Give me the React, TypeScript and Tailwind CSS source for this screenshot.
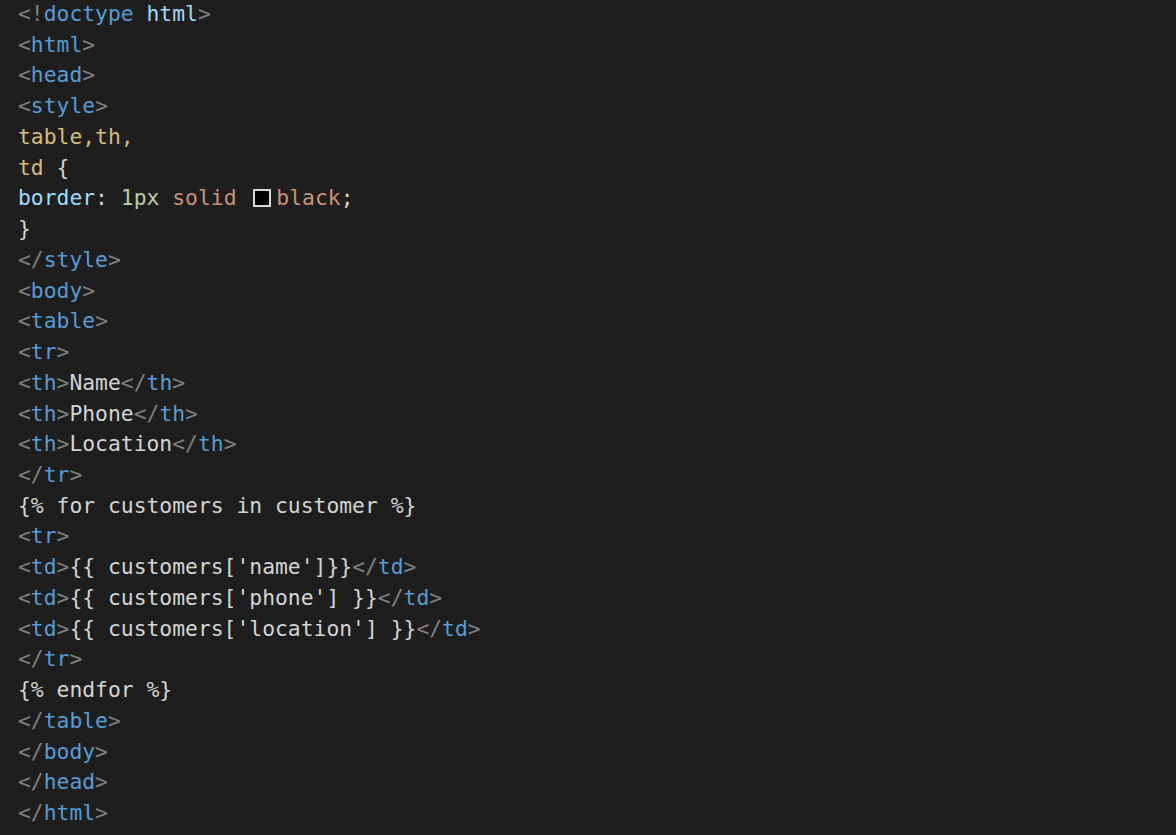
const P = "text-[#808080]"; // punctuation / brackets
const T = "text-[#569cd6]"; // tag names
const A = "text-[#9cdcfe]"; // attributes / properties
const S = "text-[#d7ba7d]"; // css selectors
const N = "text-[#b5cea8]"; // numbers
const V = "text-[#ce9178]"; // values
const X = "text-[#d4d4d4]"; // plain text

type Tok = [string, string];

function open(tag: string): Tok[] {
  return [["<", P], [tag, T], [">", P]];
}

function close(tag: string): Tok[] {
  return [["</", P], [tag, T], [">", P]];
}

const lines: (Tok[] | "swatch")[] = [
  [["<!", P], ["doctype", T], [" ", X], ["html", A], [">", P]],
  open("html"),
  open("head"),
  open("style"),
  [["table,th,", S]],
  [["td", S], [" {", X]],
  "swatch",
  [["}", X]],
  close("style"),
  open("body"),
  open("table"),
  open("tr"),
  [...open("th"), ["Name", X], ...close("th")],
  [...open("th"), ["Phone", X], ...close("th")],
  [...open("th"), ["Location", X], ...close("th")],
  close("tr"),
  [["{% for customers in customer %}", X]],
  open("tr"),
  [...open("td"), ["{{ customers['name']}}", X], ...close("td")],
  [...open("td"), ["{{ customers['phone'] }}", X], ...close("td")],
  [...open("td"), ["{{ customers['location'] }}", X], ...close("td")],
  close("tr"),
  [["{% endfor %}", X]],
  close("table"),
  close("body"),
  close("head"),
  close("html"),
];

export default function App() {
  return (
    <div className="h-[835px] w-[1176px] overflow-hidden bg-[#1e1e1e]">
      <div className="-mt-px pl-[18px] font-['DejaVu_Sans_Mono','Liberation_Mono',monospace] text-[21.35px] leading-[30.73px] whitespace-pre">
        {lines.map((line, i) =>
          line === "swatch" ? (
            <div key={i}>
              <span className={A}>border</span>
              <span className={X}>: </span>
              <span className={N}>1px</span>
              <span className={X}> </span>
              <span className={V}>solid</span>
              <span className={X}> </span>
              <span className="mr-[5px] ml-[4px] inline-block h-[18px] w-[18px] border-2 border-[#d8d8d8] bg-black align-[-2px]" />
              <span className={V}>black</span>
              <span className={X}>;</span>
            </div>
          ) : (
            <div key={i}>
              {line.map(([text, cls], j) => (
                <span key={j} className={cls}>
                  {text}
                </span>
              ))}
            </div>
          )
        )}
      </div>
    </div>
  );
}
